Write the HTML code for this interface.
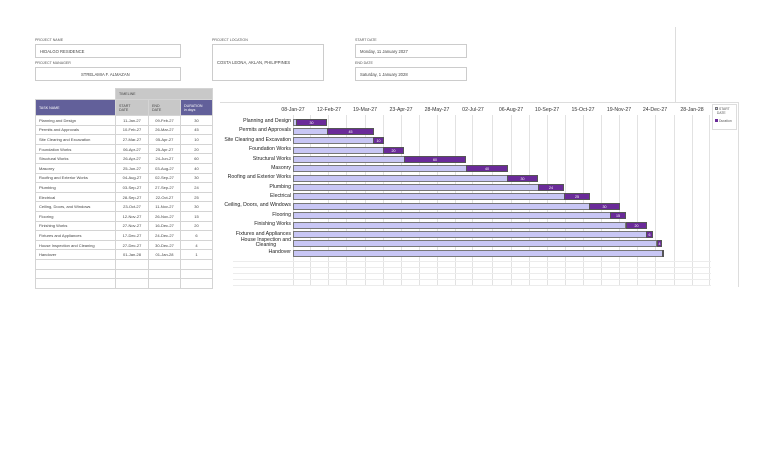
<!DOCTYPE html>
<html><head><meta charset="utf-8"><style>
*{margin:0;padding:0;box-sizing:border-box}
body{width:768px;height:466px;background:#fff;font-family:"Liberation Sans",sans-serif;position:relative;overflow:hidden;color:#333}
.a{position:absolute}
.lbl{font-size:3.6px;color:#555}
.box{border:1px solid #ccc;background:#fff;font-size:4.2px;color:#444;padding-left:4px;display:flex;align-items:center}
table{border-collapse:collapse;position:absolute;left:35px;top:88px;font-size:4px;color:#444}
td{border:1px solid #d4d4d4;height:9.6px;padding:0 3px;white-space:nowrap}
.c{text-align:center}
.bl{position:absolute;height:7px;background:#c8c6f5;border:1px solid #777}
.bp{position:absolute;height:7px;background:#6a2a99;color:#fff;font-size:3.6px;text-align:center;line-height:6px;border:1px solid #555}
.tl{position:absolute;right:477px;font-size:5.2px;color:#222;text-align:right;white-space:nowrap;line-height:5px}
.ax{position:absolute;top:107px;font-size:5.2px;color:#333;transform:translateX(-50%)}
.vg{position:absolute;top:115px;height:170px;width:1px;background:#e2e2e2}
.hg{position:absolute;left:233px;width:478px;height:1px;background:#ececec}
</style></head><body>
<div class="a" style="left:675px;top:27px;width:1px;height:75px;background:#ddd"></div>

<div class="a lbl" style="left:35px;top:38px">PROJECT NAME</div>
<div class="a box" style="left:35px;top:44px;width:146px;height:14px">HIDALGO RESIDENCE</div>
<div class="a lbl" style="left:35px;top:61px">PROJECT MANAGER</div>
<div class="a box" style="left:35px;top:67px;width:146px;height:14px;padding-left:45px">STRELAMIA F. ALMAZAN</div>
<div class="a lbl" style="left:212px;top:38px">PROJECT LOCATION</div>
<div class="a box" style="left:212px;top:44px;width:112px;height:37px">COSTA LEONA, AKLAN, PHILIPPINES</div>
<div class="a lbl" style="left:355px;top:38px">START DATE</div>
<div class="a box" style="left:355px;top:44px;width:112px;height:14px">Monday, 11 January 2027</div>
<div class="a lbl" style="left:355px;top:61px">END DATE</div>
<div class="a box" style="left:355px;top:67px;width:112px;height:14px">Saturday, 1 January 2028</div>

<table>
<tr><td style="border:none;width:80px;height:11px"></td><td colspan="3" style="background:#c8c8c8;height:11px;font-size:3.6px">TIMELINE</td></tr>
<tr style="height:16px"><td style="background:#62609a;color:#fff;font-size:3.6px;height:16px">TASK NAME</td><td style="background:#c8c8c8;width:33px;font-size:3.6px">START<br>DATE</td><td style="background:#c8c8c8;width:32px;font-size:3.6px">END<br>DATE</td><td style="background:#62609a;color:#fff;width:32px;font-size:3.6px">DURATION<br><i>in days</i></td></tr>
<tr><td>Planning and Design</td><td class="c">11-Jan-27</td><td class="c">09-Feb-27</td><td class="c">30</td></tr>
<tr><td>Permits and Approvals</td><td class="c">10-Feb-27</td><td class="c">26-Mar-27</td><td class="c">45</td></tr>
<tr><td>Site Clearing and Excavation</td><td class="c">27-Mar-27</td><td class="c">05-Apr-27</td><td class="c">10</td></tr>
<tr><td>Foundation Works</td><td class="c">06-Apr-27</td><td class="c">25-Apr-27</td><td class="c">20</td></tr>
<tr><td>Structural Works</td><td class="c">26-Apr-27</td><td class="c">24-Jun-27</td><td class="c">60</td></tr>
<tr><td>Masonry</td><td class="c">25-Jun-27</td><td class="c">03-Aug-27</td><td class="c">40</td></tr>
<tr><td>Roofing and Exterior Works</td><td class="c">04-Aug-27</td><td class="c">02-Sep-27</td><td class="c">30</td></tr>
<tr><td>Plumbing</td><td class="c">03-Sep-27</td><td class="c">27-Sep-27</td><td class="c">24</td></tr>
<tr><td>Electrical</td><td class="c">28-Sep-27</td><td class="c">22-Oct-27</td><td class="c">25</td></tr>
<tr><td>Ceiling, Doors, and Windows</td><td class="c">23-Oct-27</td><td class="c">11-Nov-27</td><td class="c">30</td></tr>
<tr><td>Flooring</td><td class="c">12-Nov-27</td><td class="c">26-Nov-27</td><td class="c">15</td></tr>
<tr><td>Finishing Works</td><td class="c">27-Nov-27</td><td class="c">16-Dec-27</td><td class="c">20</td></tr>
<tr><td>Fixtures and Appliances</td><td class="c">17-Dec-27</td><td class="c">24-Dec-27</td><td class="c">6</td></tr>
<tr><td>House Inspection and Cleaning</td><td class="c">27-Dec-27</td><td class="c">30-Dec-27</td><td class="c">4</td></tr>
<tr><td>Handover</td><td class="c">01-Jan-28</td><td class="c">01-Jan-28</td><td class="c">1</td></tr>
<tr><td></td><td></td><td></td><td></td></tr>
<tr><td></td><td></td><td></td><td></td></tr>
<tr><td></td><td></td><td></td><td></td></tr>
</table>

<!-- chart -->
<div class="a" style="left:220px;top:102px;width:519px;height:185px;border-top:1px solid #ddd;border-right:1px solid #ddd"></div>
<div class="vg" style="left:293px"></div><div class="vg" style="left:310px"></div><div class="vg" style="left:328px"></div><div class="vg" style="left:346px"></div><div class="vg" style="left:365px"></div><div class="vg" style="left:383px"></div><div class="vg" style="left:401px"></div><div class="vg" style="left:419px"></div><div class="vg" style="left:437px"></div><div class="vg" style="left:455px"></div><div class="vg" style="left:472px"></div><div class="vg" style="left:492px"></div><div class="vg" style="left:511px"></div><div class="vg" style="left:529px"></div><div class="vg" style="left:547px"></div><div class="vg" style="left:565px"></div><div class="vg" style="left:583px"></div><div class="vg" style="left:601px"></div><div class="vg" style="left:619px"></div><div class="vg" style="left:637px"></div><div class="vg" style="left:655px"></div><div class="vg" style="left:674px"></div><div class="vg" style="left:692px"></div><div class="vg" style="left:709px"></div>
<div class="hg" style="top:261px"></div><div class="hg" style="top:267px"></div><div class="hg" style="top:273px"></div><div class="hg" style="top:279px"></div><div class="hg" style="top:285px"></div>

<div class="ax" style="left:293px">08-Jan-27</div><div class="ax" style="left:329px">12-Feb-27</div><div class="ax" style="left:365px">19-Mar-27</div><div class="ax" style="left:401px">23-Apr-27</div><div class="ax" style="left:437px">28-May-27</div><div class="ax" style="left:473px">02-Jul-27</div><div class="ax" style="left:511px">06-Aug-27</div><div class="ax" style="left:547px">10-Sep-27</div><div class="ax" style="left:583px">15-Oct-27</div><div class="ax" style="left:619px">19-Nov-27</div><div class="ax" style="left:655px">24-Dec-27</div><div class="ax" style="left:692px">28-Jan-28</div>

<div class="a" style="left:712px;top:104px;width:25px;height:26px;border:1px solid #ddd;font-size:3.4px;color:#555;padding:2px">
<div><span style="display:inline-block;width:3px;height:3px;background:#c8c6f5;border:.5px solid #777"></span> START<br>&nbsp;&nbsp;DATE</div>
<div style="margin-top:4px"><span style="display:inline-block;width:3px;height:3px;background:#6a2a99"></span> Duration</div>
</div>

<div class="tl" style="top:119px">Planning and Design</div>
<div class="tl" style="top:128px">Permits and Approvals</div>
<div class="tl" style="top:138px">Site Clearing and Excavation</div>
<div class="tl" style="top:147px">Foundation Works</div>
<div class="tl" style="top:157px">Structural Works</div>
<div class="tl" style="top:166px">Masonry</div>
<div class="tl" style="top:175px">Roofing and Exterior Works</div>
<div class="tl" style="top:185px">Plumbing</div>
<div class="tl" style="top:194px">Electrical</div>
<div class="tl" style="top:203px">Ceiling, Doors, and Windows</div>
<div class="tl" style="top:213px">Flooring</div>
<div class="tl" style="top:222px">Finishing Works</div>
<div class="tl" style="top:232px">Fixtures and Appliances</div>
<div class="tl" style="top:238px;text-align:center">House Inspection and<br>Cleaning</div>
<div class="tl" style="top:250px">Handover</div>

<div class="bl" style="left:293px;top:119px;width:4px"></div><div class="bp" style="left:296px;top:119px;width:31px">30</div>
<div class="bl" style="left:293px;top:128px;width:35px"></div><div class="bp" style="left:327px;top:128px;width:47px">45</div>
<div class="bl" style="left:293px;top:137px;width:81px"></div><div class="bp" style="left:373px;top:137px;width:11px">10</div>
<div class="bl" style="left:293px;top:147px;width:91px"></div><div class="bp" style="left:383px;top:147px;width:21px">20</div>
<div class="bl" style="left:293px;top:156px;width:112px"></div><div class="bp" style="left:404px;top:156px;width:62px">60</div>
<div class="bl" style="left:293px;top:165px;width:174px"></div><div class="bp" style="left:466px;top:165px;width:42px">40</div>
<div class="bl" style="left:293px;top:175px;width:215px"></div><div class="bp" style="left:507px;top:175px;width:31px">30</div>
<div class="bl" style="left:293px;top:184px;width:246px"></div><div class="bp" style="left:538px;top:184px;width:26px">24</div>
<div class="bl" style="left:293px;top:193px;width:272px"></div><div class="bp" style="left:564px;top:193px;width:26px">25</div>
<div class="bl" style="left:293px;top:203px;width:297px"></div><div class="bp" style="left:589px;top:203px;width:31px">30</div>
<div class="bl" style="left:293px;top:212px;width:318px"></div><div class="bp" style="left:610px;top:212px;width:16px">15</div>
<div class="bl" style="left:293px;top:222px;width:333px"></div><div class="bp" style="left:626px;top:222px;width:21px">20</div>
<div class="bl" style="left:293px;top:231px;width:354px"></div><div class="bp" style="left:646px;top:231px;width:7px">6</div>
<div class="bl" style="left:293px;top:240px;width:364px"></div><div class="bp" style="left:657px;top:240px;width:5px">4</div>
<div class="bl" style="left:293px;top:250px;width:370px"></div><div class="bp" style="left:662px;top:250px;width:2px"></div>
</body></html>
